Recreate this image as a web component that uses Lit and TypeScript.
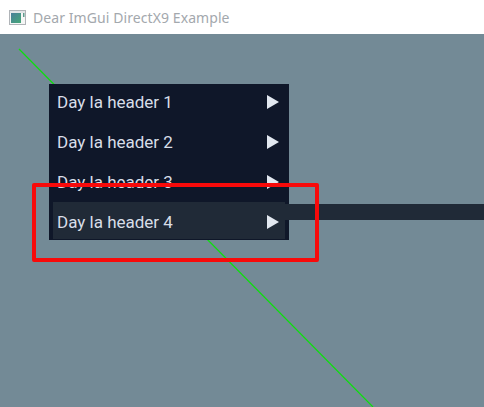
import { LitElement, html, css, svg } from "lit";
import { customElement } from "lit/decorators.js";

@customElement("app-root")
export class AppRoot extends LitElement {
  static styles = css`
    :host { display: block; width: 484px; height: 407px; overflow: hidden; font-family: Roboto, sans-serif; }
    .titlebar { height: 34px; background: #fff; display: flex; align-items: center; gap: 7px; padding-left: 9px; box-sizing: border-box; }
    .app-icon { width: 17px; height: 15px; flex: none; display: block; }
    .title { font: 14px "Noto Sans", "Open Sans", sans-serif; letter-spacing: 0.08px; color: #a3a8ad; white-space: nowrap; }
    .canvas { position: relative; height: 373px; background: #738a96; padding: 50px 0 0 49px; box-sizing: border-box; overflow: hidden; }
    .overlay { position: absolute; left: 0; top: 0; width: 484px; height: 373px; pointer-events: none; }
    .menu { position: relative; width: 240px; height: 156px; background: #0f1729; padding: 0 4px; box-sizing: border-box; overflow: hidden; }
    .list { margin-top: -2px; display: flex; flex-direction: column; gap: 3px; }
    .row { height: 37px; padding: 3px 6px 0 4px; box-sizing: border-box; display: flex; align-items: center; justify-content: space-between; color: #d8dee8; font-size: 17px; white-space: nowrap; }
    .row.active { background: #202a37; }
    .arrow { width: 12px; height: 14px; display: block; }
    .bar { position: absolute; left: 285px; top: 170px; width: 199px; height: 16px; background: #202a37; }
    .mark { position: absolute; left: 32px; top: 149px; width: 287px; height: 79px; box-sizing: border-box; border: 4px solid #f80a0a; border-radius: 2px; }
  `;

  render() {
    const rows = [1, 2, 3, 4];
    return html`
      <div class="titlebar">
        <svg class="app-icon" viewBox="0 0 17 15">
          <defs>
            <linearGradient id="g" x1="0" y1="0" x2="1" y2="1">
              <stop offset="0" stop-color="#4a7f9a" /><stop offset="1" stop-color="#45a878" />
            </linearGradient>
          </defs>
          <rect x="0.5" y="0.5" width="16" height="14" fill="#f5f6f5" stroke="#b0b4b8" />
          <rect x="1" y="1" width="15" height="2" fill="#e2e5e7" />
          <rect x="2" y="3" width="10" height="10" fill="url(#g)" />
          <rect x="14" y="3" width="1.5" height="4" fill="#5f9a8c" />
        </svg>
        <span class="title">Dear ImGui DirectX9 Example</span>
      </div>
      <div class="canvas">
        <svg class="overlay" viewBox="0 0 484 373">
          <line x1="19" y1="15" x2="373" y2="373" stroke="#0ce00c" stroke-width="1.2" />
        </svg>
        <div class="menu">
          <div class="list">
            ${rows.map(
              (n) => html`
                <div class="row ${n === 4 ? "active" : ""}">
                  <span>Day la header ${n}</span>
                  <svg class="arrow" viewBox="0 0 12 14">${svg`<polygon points="0,0 12,7 0,14" fill="#e2e8f0" />`}</svg>
                </div>
              `
            )}
          </div>
        </div>
        <div class="bar"></div>
        <div class="mark"></div>
      </div>
    `;
  }
}
